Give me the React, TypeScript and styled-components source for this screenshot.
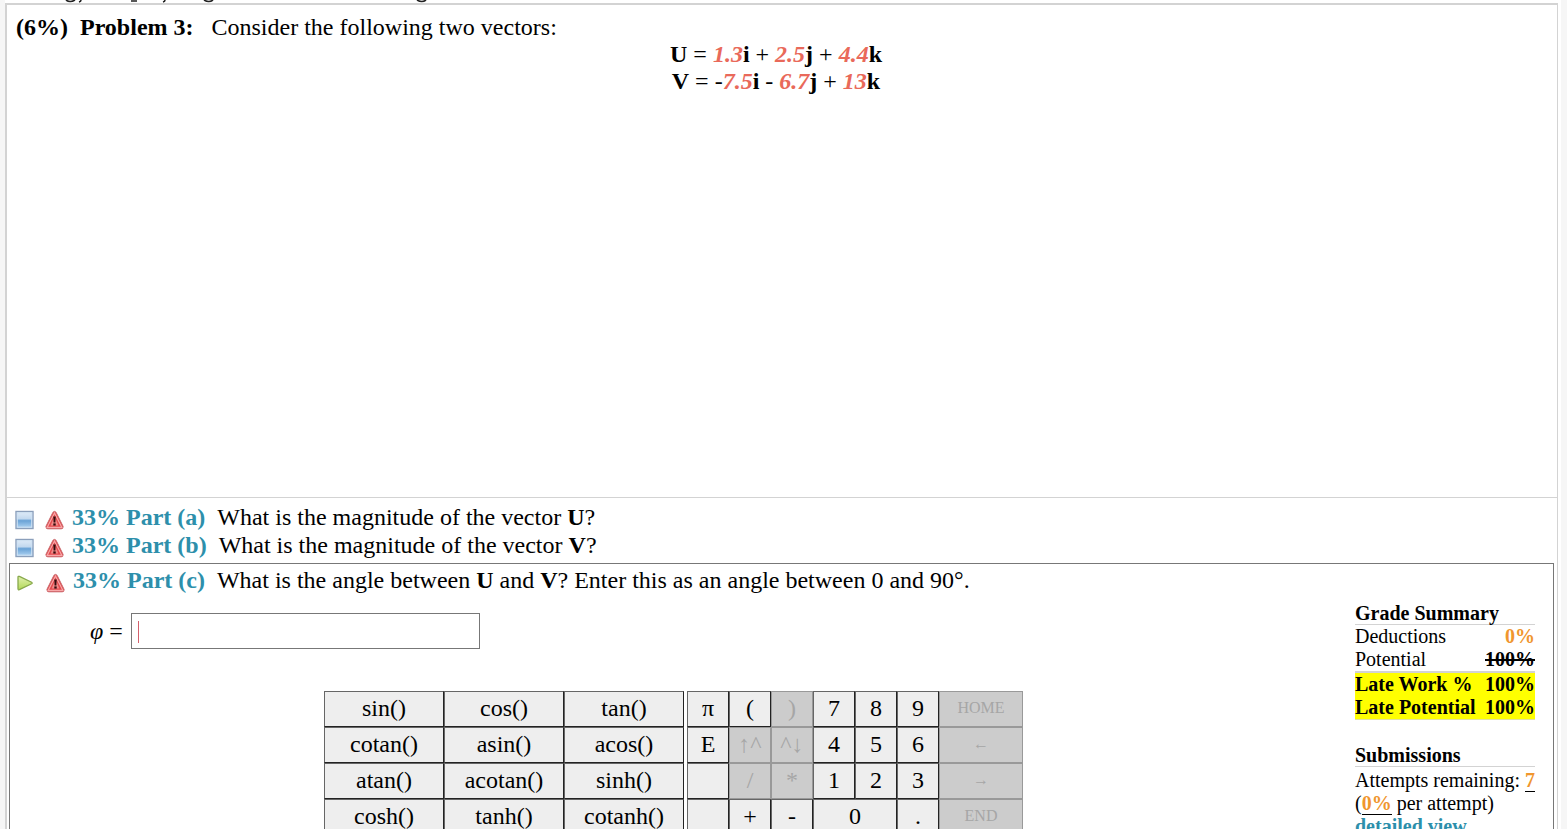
import React from "react";
import styled, { createGlobalStyle } from "styled-components";

const GlobalStyle = createGlobalStyle`
  *, *::before, *::after { box-sizing: border-box; }
  body {
    margin: 0;
    background: #f6f6f6;
    color: #000;
    font-family: "Liberation Serif", "Times New Roman", serif;
    font-size: 24px;
    line-height: 28px;
  }
  button, input { font: inherit; color: inherit; border-radius: 0; margin: 0; }
`;

const Page = styled.div`
  height: 100vh;
  overflow: hidden;
  padding: 0 6px 0 5px;
`;

const Sheet = styled.div`
  background: #fff;
  min-height: 100vh;
  padding-right: 3px;
`;

const PreviousLine = styled.svg`
  display: block;
  width: 100%;
  height: 3px;
`;

const Problem = styled.main`
  border: 2px solid #d3d3d3;
  border-right-width: 1px;
  min-height: 100vh;
`;

const Statement = styled.section`
  height: 493px;
  padding: 8px 9px 0;
  border-bottom: 1px solid #d3d3d3;
`;

const Title = styled.h1`
  display: flex;
  gap: 18px;
  margin: 0;
  font-size: 24px;
  line-height: 28px;
`;

const Prompt = styled.span`
  font-weight: normal;
`;

const Vectors = styled.div`
  padding-right: 12px;
  font-size: 24px;
  line-height: 27px;
  text-align: center;
`;

const Value = styled.em`
  color: #e9695a;
  font-weight: bold;
`;

const PartList = styled.div`
  padding: 5px 8px 4px;
`;

const PartRow = styled.div`
  display: flex;
  align-items: center;
  height: 28px;
  font-size: 24px;
`;

const Marker = styled.svg`
  flex: none;
  width: 20px;
  height: 20px;
  margin: 6px 10px 0 0;
`;

const Warning = styled(Marker)`
  margin-right: 7px;
`;

const PartLink = styled.a`
  color: #2d8fab;
  font-weight: bold;
  text-decoration: none;
  margin-right: 12px;
`;

const ActivePart = styled.section`
  min-height: 100vh;
  margin: 0 3px 0 2px;
  padding: 2px 18px 0 6px;
  border: 1px solid #777;
`;

const Workspace = styled.div`
  display: flex;
  justify-content: space-between;
  align-items: flex-start;
`;

const AnswerArea = styled.div`
  flex: 1;
  padding: 19px 0 0 74px;
`;

const AnswerRow = styled.div`
  display: flex;
  align-items: center;
  gap: 8px;
`;

const AnswerLabel = styled.label`
  font-size: 24px;
`;

const AnswerBox = styled.input`
  width: 349px;
  height: 36px;
  padding: 0 6px;
  border: 1px solid #777;
  background: #fff;
  outline: none;
  caret-color: #d9828a;
`;

const AnswerField = styled.div`
  position: relative;
  display: flex;
`;

const Caret = styled.span`
  position: absolute;
  left: 7px;
  top: 8px;
  width: 1px;
  height: 22px;
  background: #d4606c;
`;

const Keypad = styled.div`
  display: flex;
  gap: 3px;
  margin: 42px 0 0 234px;
`;

const FunctionKeys = styled.div`
  display: grid;
  grid-template-columns: repeat(3, 120px);
  grid-auto-rows: 36px;
`;

const NumberKeys = styled.div`
  display: grid;
  grid-template-columns: repeat(6, 42px) 84px;
  grid-auto-rows: 36px;
`;

const Key = styled.button<{ $wide?: boolean; $small?: boolean }>`
  grid-column: span ${(p) => (p.$wide ? 2 : 1)};
  padding: 0 0 2px;
  border: 1px solid #222;
  border-top-color: #666;
  border-left-color: #666;
  background: #eee;
  font-size: ${(p) => (p.$small ? 16 : 24)}px;
  line-height: 28px;
  white-space: nowrap;

  &:disabled {
    border-color: #999;
    background: #ccc;
    color: #a6a6a6;
  }
`;

const Sidebar = styled.aside`
  flex: none;
  width: 180px;
  padding-top: 8px;
  font-size: 20px;
  line-height: 23px;
`;

const SideHeading = styled.h2`
  margin: 0;
  border-bottom: 1px solid #d3d3d3;
  font-size: 20px;
  line-height: 22px;
`;

const Summary = styled.table`
  width: 100%;
  margin-bottom: 24px;
  border-collapse: collapse;
`;

const LateRows = styled.tbody`
  background: #ff0;
  border-top: 2px solid #d3d3d3;
  font-weight: bold;
  border-bottom: 1px solid #e2e2a0;
`;

const NameCell = styled.th<{ $strong?: boolean }>`
  padding: 0;
  font-weight: ${(p) => (p.$strong ? "bold" : "normal")};
  text-align: left;
  white-space: nowrap;
`;

const ValueCell = styled.td<{ $tone?: "warn" | "struck" }>`
  padding: 0;
  text-align: right;
  font-weight: bold;
  color: ${(p) => (p.$tone === "warn" ? "#f0962e" : "#000")};
  text-decoration: ${(p) => (p.$tone === "struck" ? "line-through" : "none")};
`;

const Detail = styled.div`
  margin-top: 2px;
  white-space: nowrap;
`;

const Count = styled.span`
  border-bottom: 1px solid #000;
  color: #f0962e;
  font-weight: bold;
`;

const DetailLink = styled.a`
  color: #2d8fab;
  font-weight: bold;
  text-decoration: none;
`;

function SquareIcon() {
  return (
    <Marker viewBox="0 0 20 20" aria-hidden="true">
      <defs>
        <linearGradient id="sq" x1="0" y1="0" x2="0" y2="1">
          <stop offset="0" stopColor="#e2edf8" />
          <stop offset="0.42" stopColor="#c3d9ef" />
          <stop offset="0.54" stopColor="#69a2d6" />
          <stop offset="1" stopColor="#b4d7f4" />
        </linearGradient>
      </defs>
      <rect x="1" y="1.5" width="17" height="17" fill="url(#sq)" stroke="#8b9fbb" strokeWidth="1.4" />
      <rect x="2.3" y="2.8" width="14.4" height="14.4" fill="none" stroke="#cfe1f3" strokeWidth="1" />
    </Marker>
  );
}

function PlayIcon() {
  return (
    <Marker viewBox="0 0 20 20" aria-hidden="true">
      <defs>
        <linearGradient id="pl" x1="0" y1="0" x2="0" y2="1">
          <stop offset="0" stopColor="#e0f0ae" />
          <stop offset="1" stopColor="#b3d958" />
        </linearGradient>
      </defs>
      <path d="M2 4.2Q2 3 3.4 3.4L15.6 9.2Q16.8 10 15.6 10.8L3.4 16.7Q2 17.1 2 15.8Z" fill="url(#pl)" stroke="#87a84b" strokeWidth="1.3" />
    </Marker>
  );
}

function WarningIcon() {
  return (
    <Warning viewBox="0 0 20 20" aria-hidden="true">
      <path d="M8 2.2Q9.5 0.6 11 2.2L18 16.2Q18.5 18.8 16.3 18.8H2.7Q0.7 18.8 1 16.2Z" fill="#e4484c" stroke="#c96a6e" strokeWidth="1" />
      <path d="M9.5 3L16.8 17.3H2.2Z" fill="none" stroke="#f7a9aa" strokeWidth="1.2" />
      <path d="M9.5 6L13.3 15.5H5.7Z" fill="#f08a88" />
      <path d="M8.3 6.6H10.7L10.4 12.4H8.6Z" fill="#350b0d" />
      <rect x="8.3" y="13.4" width="2.4" height="2.2" fill="#350b0d" />
    </Warning>
  );
}

type KeyDef = { label: string; name?: string; off?: boolean; wide?: boolean; small?: boolean };

const functionKeys = [
  "sin()", "cos()", "tan()",
  "cotan()", "asin()", "acos()",
  "atan()", "acotan()", "sinh()",
  "cosh()", "tanh()", "cotanh()",
];

const numberKeys: KeyDef[] = [
  { label: "π" }, { label: "(" }, { label: ")", off: true },
  { label: "7" }, { label: "8" }, { label: "9" }, { label: "HOME", off: true, small: true },
  { label: "E" }, { label: "↑^", off: true }, { label: "^↓", off: true },
  { label: "4" }, { label: "5" }, { label: "6" }, { label: "←", off: true, small: true },
  { label: "", name: "blank" }, { label: "/", off: true }, { label: "*", off: true },
  { label: "1" }, { label: "2" }, { label: "3" }, { label: "→", off: true, small: true },
  { label: "", name: "blank" }, { label: "+" }, { label: "-" },
  { label: "0", wide: true }, { label: "." }, { label: "END", off: true, small: true },
];

export default function App() {
  return (
    <>
      <GlobalStyle />
      <Page>
        <Sheet>
          <PreviousLine aria-hidden="true">
            <path d="M61 0Q65 3 70 0M74 2Q76 1.4 76 0M126 1H132M158 2Q160 1.4 160 0M199 0Q204 3 208 0M412 0Q417 3 421 0" fill="none" stroke="#222" strokeWidth="1.6" />
          </PreviousLine>
          <Problem>
            <Statement>
              <Title>
                <span>(6%)&nbsp; Problem 3:</span>
                <Prompt>Consider the following two vectors:</Prompt>
              </Title>
              <Vectors>
                <div><b>U</b> = <Value>1.3</Value><b>i</b> + <Value>2.5</Value><b>j</b> + <Value>4.4</Value><b>k</b></div>
                <div><b>V</b> = -<Value>7.5</Value><b>i</b> - <Value>6.7</Value><b>j</b> + <Value>13</Value><b>k</b></div>
              </Vectors>
            </Statement>
            <PartList>
              <PartRow>
                <SquareIcon /><WarningIcon />
                <PartLink href="#a">33% Part (a)</PartLink>
                <span>What is the magnitude of the vector <b>U</b>?</span>
              </PartRow>
              <PartRow>
                <SquareIcon /><WarningIcon />
                <PartLink href="#b">33% Part (b)</PartLink>
                <span>What is the magnitude of the vector <b>V</b>?</span>
              </PartRow>
            </PartList>
            <ActivePart>
              <PartRow>
                <PlayIcon /><WarningIcon />
                <PartLink href="#c">33% Part (c)</PartLink>
                <span>What is the angle between <b>U</b> and <b>V</b>? Enter this as an angle between 0 and 90°.</span>
              </PartRow>
              <Workspace>
                <AnswerArea>
                  <AnswerRow>
                    <AnswerLabel htmlFor="phi"><i>φ</i> =</AnswerLabel>
                    <AnswerField>
                      <AnswerBox id="phi" type="text" />
                      <Caret />
                    </AnswerField>
                  </AnswerRow>
                  <Keypad>
                    <FunctionKeys>
                      {functionKeys.map((k) => <Key key={k} type="button">{k}</Key>)}
                    </FunctionKeys>
                    <NumberKeys>
                      {numberKeys.map((k, i) => (
                        <Key key={i} type="button" disabled={k.off} $wide={k.wide} $small={k.small} aria-label={k.name}>
                          {k.label}
                        </Key>
                      ))}
                    </NumberKeys>
                  </Keypad>
                </AnswerArea>
                <Sidebar>
                  <SideHeading>Grade Summary</SideHeading>
                  <Summary>
                    <tbody>
                      <tr><NameCell scope="row">Deductions</NameCell><ValueCell $tone="warn">0%</ValueCell></tr>
                      <tr><NameCell scope="row">Potential</NameCell><ValueCell $tone="struck">100%</ValueCell></tr>
                    </tbody>
                    <LateRows>
                      <tr><NameCell scope="row" $strong>Late Work %</NameCell><ValueCell>100%</ValueCell></tr>
                      <tr><NameCell scope="row" $strong>Late Potential</NameCell><ValueCell>100%</ValueCell></tr>
                    </LateRows>
                  </Summary>
                  <SideHeading>Submissions</SideHeading>
                  <Detail>
                    Attempts remaining: <Count>7</Count><br />
                    (<Count>0%</Count> per attempt)<br />
                    <DetailLink href="#detail">detailed view</DetailLink>
                  </Detail>
                </Sidebar>
              </Workspace>
            </ActivePart>
          </Problem>
        </Sheet>
      </Page>
    </>
  );
}
